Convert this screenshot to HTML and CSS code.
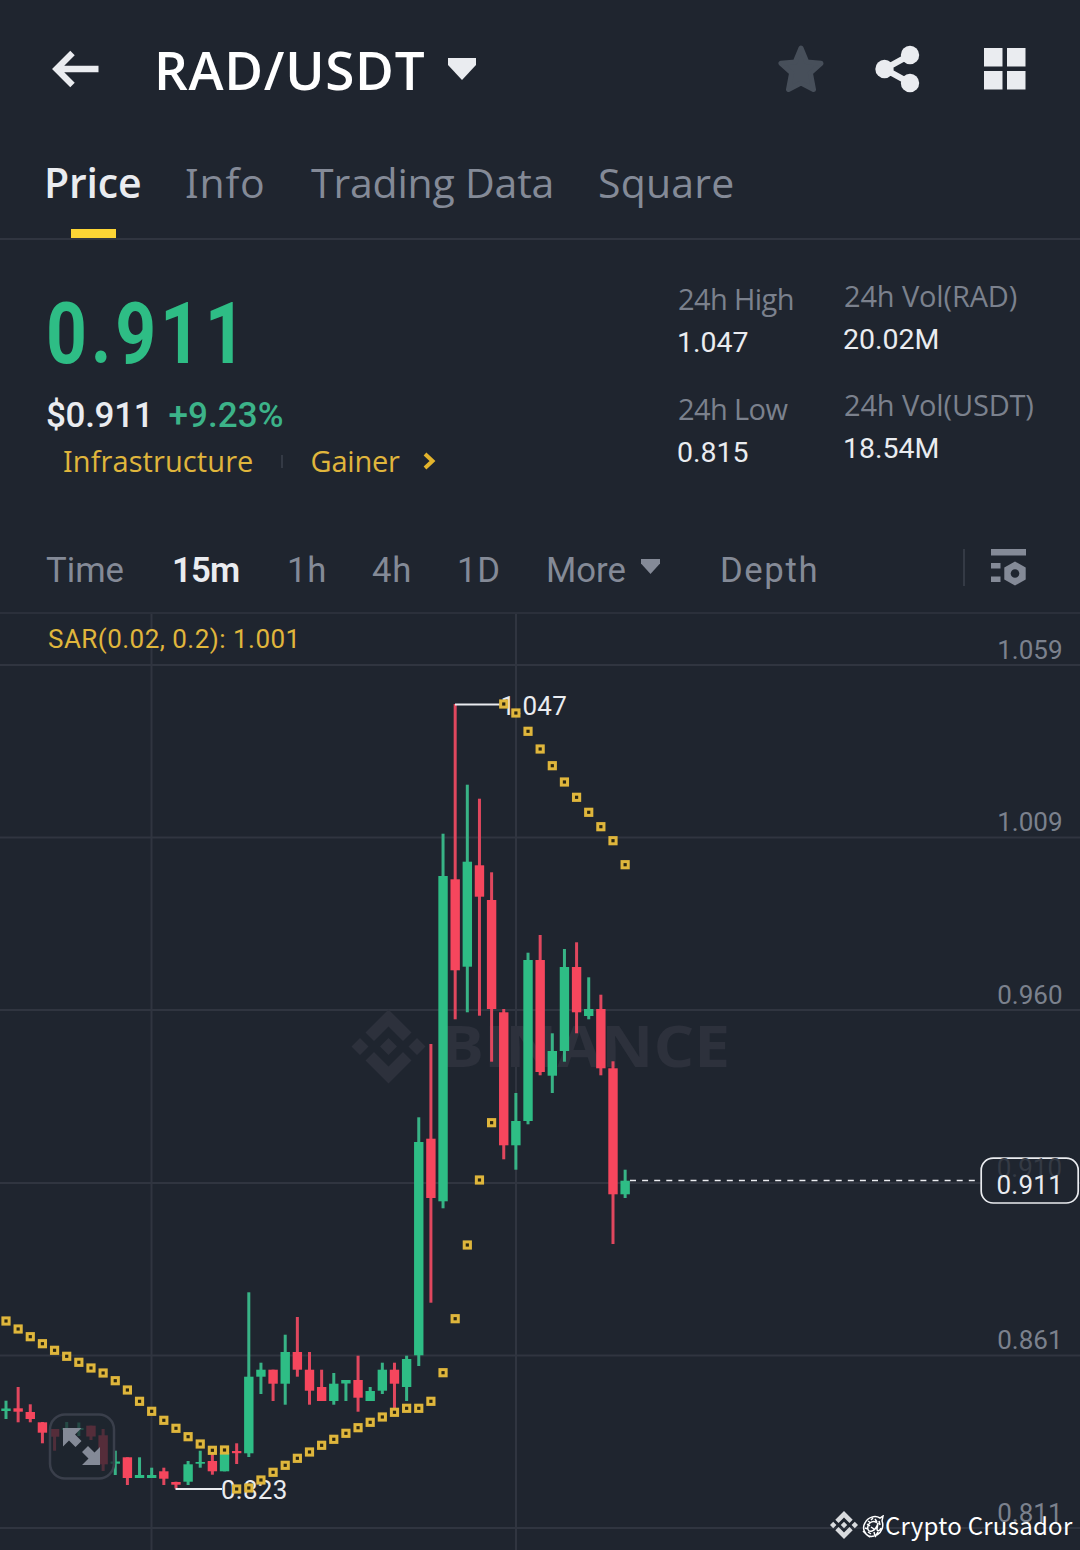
FILE: index.html
```
<!DOCTYPE html>
<html lang="en">
<head>
<meta charset="utf-8">
<title>RAD/USDT</title>
<link rel="stylesheet" href="styles.css">
</head>
<body>
<header class="topbar">
  <svg class="back" width="47" height="38" viewBox="0 0 47 38"><path d="M46.5 19H6M20.500 3 4.500 19l16 16" fill="none" stroke="#eaecf0" stroke-width="6.300"/></svg>
  <h1 class="pair">RAD/USDT</h1>
  <svg class="pair-caret" width="28" height="22" viewBox="0 0 28 22"><path d="M0 0h28v7L14 22 0 7z" fill="#eaecf0"/></svg>
  <div class="actions">
    <svg width="46" height="48" viewBox="0 0 46 48"><path d="M23 3l5.800 14L43 18.300 32.400 28 35.500 44.500 23 38l-12.500 6.500L13.600 28 3 18.300 17.200 17z" fill="#474f5a" stroke="#474f5a" stroke-width="5" stroke-linejoin="round"/></svg>
    <svg width="45" height="48" viewBox="0 0 45 48"><path d="M35 10 9.500 24 35 38" fill="none" stroke="#eaecf0" stroke-width="6"/><g fill="#eaecf0"><circle cx="9.500" cy="24" r="9.200"/><circle cx="35" cy="10" r="9.200"/><circle cx="35" cy="38" r="9.200"/></g></svg>
    <svg width="42" height="42" viewBox="0 0 42 42"><path d="M0 0h18.500v18.500H0zM23 0h18.500v18.500H23zM0 23h18.500v18.500H0zM23 23h18.500v18.500H23z" fill="#eaecf0"/></svg>
  </div>
</header>

<nav class="tabs">
  <span class="tab tab-active">Price</span>
  <span class="tab tab-info">Info</span>
  <span class="tab tab-data">Trading Data</span>
  <span class="tab tab-square">Square</span>
</nav>

<section class="summary">
  <div class="quote">
    <div class="last-price">0.911</div>
    <div class="sub-price"><span>$0.911</span><span class="change">+9.23%</span></div>
    <div class="tags">
      <span class="tag-infra">Infrastructure</span>
      <i class="tag-divider"></i>
      <span class="tag-gainer">Gainer</span>
      <svg class="chevron" width="14" height="18" viewBox="0 0 14 18"><path d="M2 2l7.500 7L2 16" fill="none" stroke="#e3b42c" stroke-width="4"/></svg>
    </div>
  </div>
  <dl class="stats stats-range">
    <div><dt class="tight">24h High</dt><dd>1.047</dd></div>
    <div><dt class="tight">24h Low</dt><dd>0.815</dd></div>
  </dl>
  <dl class="stats stats-volume">
    <div><dt>24h Vol(RAD)</dt><dd>20.02M</dd></div>
    <div><dt>24h Vol(USDT)</dt><dd>18.54M</dd></div>
  </dl>
</section>

<nav class="intervals">
  <span>Time</span>
  <span class="interval-active">15m</span>
  <span class="wide">1h</span>
  <span class="wide">4h</span>
  <span class="wide">1D</span>
  <span class="more">More<svg width="19" height="15" viewBox="0 0 19 15"><path d="M0 0h19v4.500L9.500 15 0 4.500z" fill="#848a97"/></svg></span>
  <span class="wider">Depth</span>
  <span class="settings">
    <svg width="35" height="37" viewBox="0 0 35 37"><path d="M0 0h35v6.500H0zM0 14h9.500v5.500H0zM0 27.500h9.500V33H0zM24 12.500l10.700 6v12L24 36.500l-10.700-6v-12z" fill="#848a97"/><circle cx="24" cy="24.500" r="4.300" fill="#1f252f"/></svg>
  </span>
</nav>

<main class="chart">
  <svg id="plot" width="1080" height="936" viewBox="0 614 1080 936">
    <g stroke="#303540" stroke-width="2">
      <path d="M0 665H1080M0 837.500H1080M0 1010H1080M0 1183H1080M0 1355.500H1080M0 1528H1080M151.500 614V1550M516 614V1550"/>
    </g>
    <g fill="#2d313c">
      <g transform="translate(388.500 1046.500)">
        <path d="M0-37 23-14 14.500-5.500 0-20-14.500-5.500-23-14zM0 37 23 14 14.500 5.500 0 20-14.500 5.500-23 14zM0-8.500 8.500 0 0 8.500-8.500 0zM-28.500-8.500-20 0l-8.500 8.500L-37 0zM28.500-8.500 37 0l-8.500 8.500L20 0z"/>
      </g>
      <text class="brand" x="441" y="1067" textLength="289" lengthAdjust="spacingAndGlyphs">BINANCE</text>
    </g>
    <g class="axis" text-anchor="end">
      <text x="1062.500" y="659">1.059</text>
      <text x="1062.500" y="831">1.009</text>
      <text x="1062.500" y="1004">0.960</text>
      <text x="1062.500" y="1349">0.861</text>
      <text x="1062.500" y="1522">0.811</text>
    </g>
    <text class="sar-label" x="48" y="648">SAR(0.02, 0.2): 1.001</text>
    <g id="candles"></g>
    <path d="M455 704.500H503M175.500 1489H222" stroke="#eaecf0" stroke-width="2"/>
    <text class="mark" x="500.500" y="715">1.047</text>
    <text class="mark" x="221" y="1499">0.823</text>
    <g id="sar" fill="#2b2611" stroke="#dfb63c" stroke-width="3"></g>
    <path d="M630 1180.500H978" stroke="#eaecf0" stroke-width="1.700" stroke-dasharray="6 6.100"/>
    <rect x="981.200" y="1158.200" width="97" height="44.800" rx="12" fill="#1f252f" stroke="#eaecf0" stroke-width="1.700"/>
    <text class="ghost" x="1062" y="1177" text-anchor="end">0.910</text>
    <text class="mark" x="996.500" y="1194">0.911</text>
    <g>
      <rect x="50" y="1414.500" width="64" height="64" rx="15" fill="#1f252f" fill-opacity=".75" stroke="#3a3f4b" stroke-width="2.500"/>
      <path d="M63 1428h18.500l-6.500 6.500 6.500 6.500-6 6-6.500-6.500-6 6zM100 1465H82l6.500-6.500-6.500-6.500 6-6 6.500 6.500 5.500-5.500z" fill="#848a97"/>
    </g>
  </svg>
  <div class="credit">
    <svg width="28" height="30" viewBox="-37 -39 74 78"><path d="M0-37 23-14 14.500-5.500 0-20-14.500-5.500-23-14zM0 37 23 14 14.500 5.500 0 20-14.500 5.500-23 14zM0-8.500 8.500 0 0 8.500-8.500 0zM-28.500-8.500-20 0l-8.500 8.500L-37 0zM28.500-8.500 37 0l-8.500 8.500L20 0z" fill="#d9dbde"/></svg>
    <svg class="emblem" width="22" height="24" viewBox="0 0 22 24" fill="none" stroke="#fff" stroke-width="1.500"><path d="M8 22C2 19 0 13 3 8 6 2 13 0 18 3l3-2-1 5c2 5 0 11-5 14M4 19c2 2 5 3 8 2M15 8c-3-3-8-1-9 3s1 6 4 5 5-4 6-8l-1 6c0 3 3 2 4-1M9 5l2-2M3 13l3 1M12 17l1 4M6 17l3 2M5 9l3 2M13 4l2 3M9 12l3 2M1 16l4 4M16 17l-3 5M6 6l3 2M17 6l1 4"/></svg>
    <span>Crypto Crusador</span>
  </div>
</main>
<script src="chart.js"></script>
</body>
</html>
```
FILE: chart.js
```
// Each candle: direction (1 up, 0 down), high, body top, body bottom, low.
const candles = [
  [1,1400.7,1408.5,1411,1419],[0,1387,1408.3,1411.7,1422.3],[0,1404.3,1412,1419,1422.3],[0,1422,1422.3,1432.7,1443.3],
  [0,1429,1429,1436.7,1450.7],[1,1422,1428,1430,1436],[1,1422.5,1428,1430,1436],[0,1425.7,1425.7,1436.5,1440],
  [0,1429,1435.3,1464.3,1471],[1,1450.7,1461.5,1463.7,1475],[0,1457.3,1457.3,1478,1485],[1,1457.3,1475,1478,1478],
  [1,1467.7,1475,1478,1478],[0,1467.7,1471.3,1478.7,1485],[0,1481.7,1482,1484.7,1488.5],[1,1461,1464.3,1481.7,1485],
  [1,1450.7,1462,1463.7,1467.7],[0,1453.5,1461,1471.3,1474.7],[1,1450,1453,1471.3,1471.3],[0,1443.3,1451,1453.2,1464],
  [1,1292.3,1376.7,1453.3,1457],[1,1362.7,1369.7,1376.7,1394],[0,1369.7,1369.7,1383.7,1401],[1,1334.7,1352,1383.7,1404.7],
  [0,1317,1352,1369.7,1376.7],[0,1352,1369.7,1390.7,1404.7],[0,1369.7,1387,1401,1401],[1,1373,1383.7,1401,1404.7],
  [1,1380,1380,1383.5,1401],[0,1355.7,1380,1397.7,1411.7],[1,1387,1391,1401,1401],[1,1362.7,1369.7,1390.7,1394],
  [0,1362.7,1369.7,1383.7,1408],[1,1355.7,1359,1387,1401],[1,1117.3,1142,1355.3,1366],[0,1044,1138.7,1198,1302.7],
  [1,833.7,876,1201.3,1208.3],[0,704,879.3,970.3,1019.3],[1,784.7,861.7,966.7,1012.3],[0,798.7,865.3,896.7,1015.7],
  [0,872.3,900,1009,1061.7],[0,1009,1012.3,1145.3,1159.3],[1,1093,1121,1145.3,1169.7],[1,952.7,960,1121,1124.3],
  [0,935,960,1072,1075.3],[1,1033.3,1051,1075.7,1093],[1,949,967,1051,1061.7],[0,942.3,967,1012.3,1033.3],
  [1,977.3,1009,1016,1019.3],[0,994.7,1009,1068.3,1075.3],[0,1061.3,1068.3,1194.3,1244],[1,1169.7,1180.7,1194.3,1198]
];

const sar = [
  1321,1329,1336.7,1343.7,1350.3,1356.3,1362.3,1368,1373,1380.7,1390,1401.3,1411.3,
  1420.3,1428.3,1436.7,1444,1450.3,1450,1489,1488,1480,1472.3,1465.3,1458.3,1452,
  1445.3,1439.3,1433.3,1427.7,1422.3,1417,1412.3,1408.3,1408.3,1401.3,1372.7,1318.7,1245,
  1180,1122.7,704,713,731.3,749,765.7,782,797.3,812.3,826.7,840.7,864.7
];

const STEP = 12.14;
const xAt = i => 6 + i * STEP;

const rect = (x, y, w, h, fill) =>
  `<rect x="${x.toFixed(2)}" y="${y}" width="${w}" height="${h.toFixed(1)}"${fill ? ` fill="${fill}"` : ''}/>`;

document.getElementById('candles').innerHTML = candles.map(([up, high, top, bottom, low], i) => {
  const x = xAt(i);
  return rect(x - 1.5, high, 3, low - high, up ? '#38b386' : '#e0475e') +
         rect(x - 4.7, top, 9.4, bottom - top, up ? '#2ebd85' : '#f6465d');
}).join('');

document.getElementById('sar').innerHTML = sar.map((y, i) => rect(xAt(i) - 3.1, y - 3.1, 6.2, 6.2)).join('');
```
FILE: styles.css
```
* { box-sizing: border-box; margin: 0; padding: 0; }

body {
  width: 1080px;
  height: 1550px;
  overflow: hidden;
  background: #1f252f;
  color: #eaecf0;
  font-family: "Open Sans", sans-serif;
}

svg { display: block; flex: none; }
span { white-space: nowrap; }

.topbar {
  display: flex;
  align-items: center;
  height: 137px;
  padding: 0 54px 0 52px;
}
.pair {
  width: 272px;
  margin-left: 55px;
  padding-top: 2px;
  color: #fff;
  font-size: 53px;
  font-weight: 650;
  line-height: 72px;
  letter-spacing: .7px;
}
.pair-caret { margin-left: 22px; }
.actions { display: flex; align-items: center; margin-left: auto; }
.actions svg + svg { margin-left: 51px; }
.actions svg:last-child { margin-left: 64px; }

.tabs {
  display: grid;
  grid-template-columns: 141px 126px 287px auto;
  height: 103px;
  padding-left: 44px;
  border-bottom: 2px solid #303540;
  color: #848a97;
  font-size: 41px;
  font-weight: 500;
  line-height: 91px;
}
.tab-active { position: relative; color: #eaecf0; font-weight: 600; letter-spacing: -.2px; }
.tab-active::after {
  content: "";
  position: absolute;
  left: 27px;
  bottom: 0;
  width: 45px;
  height: 9px;
  background: #fcd535;
}
.tab-info { letter-spacing: .8px; }
.tab-data { letter-spacing: -.2px; }
.tab-square { letter-spacing: .2px; }
.tab-info, .tag-infra { font-feature-settings: "ss01", "ss02", "ss03", "salt", "cv01"; }

.summary {
  display: grid;
  grid-template-columns: 677px 166px auto;
  height: 287px;
}
.quote { padding: 50px 0 0 46px; }
.last-price {
  width: 250px;
  height: 101px;
  color: #2ebd85;
  font: 700 85px/88px Roboto, sans-serif;
  letter-spacing: 4.500px;
  transform: scaleX(.84);
  transform-origin: left;
}
.sub-price {
  display: flex;
  gap: 15px;
  font: 500 35px/50px Roboto, sans-serif;
  letter-spacing: -.3px;
}
.change { color: #3cb389; letter-spacing: .1px; }
.tags {
  display: flex;
  align-items: center;
  padding-left: 17px;
  color: #e0b63c;
  font-size: 29px;
  line-height: 40px;
}
.tag-infra { letter-spacing: .1px; }
.tag-gainer { letter-spacing: -.2px; }
.tag-divider { width: 2px; height: 13px; margin: 0 28px 0 27px; background: #343a45; }
.chevron { margin-left: 23px; }

.stats { display: flex; flex-direction: column; gap: 22px; padding-top: 37px; }
.stats-volume { gap: 21.500px; padding-top: 33.500px; }
.stats dt { padding-left: 1px; color: #7b818d; font-size: 29px; line-height: 44px; letter-spacing: -.15px; white-space: nowrap; }
.stats .tight { letter-spacing: -.6px; }
.stats dd { font: 28.500px/44px Roboto, sans-serif; }

.intervals {
  display: grid;
  grid-template-columns: 126px 115px 85px 85px 89px 174px 243px auto;
  height: 87px;
  padding-left: 46px;
  border-bottom: 2px solid #2b303b;
  color: #848a97;
  font: 34.700px/86px Roboto, sans-serif;
}
.interval-active { color: #eaecf0; font-weight: 600; letter-spacing: -.8px; }
.wide { letter-spacing: .8px; }
.wider { letter-spacing: 1.600px; }
.more { display: flex; align-items: center; }
.more svg { margin: -8px 0 0 15px; }
.settings {
  align-self: center;
  display: flex;
  height: 37px;
  margin-bottom: 6px;
  padding-left: 26px;
  border-left: 2px solid #343a45;
}

.chart { position: relative; height: 936px; }
.chart text { font-family: Roboto, sans-serif; font-size: 26px; }
.axis text { fill: #7b818d; }
.chart .sar-label { fill: #e0b63c; letter-spacing: .47px; }
.chart .mark { fill: #eaecf0; letter-spacing: .25px; }
.chart .ghost { fill: #343a44; }
.chart .brand { font-family: "Open Sans", sans-serif; font-size: 57px; font-weight: 700; }

.credit {
  position: absolute;
  right: 7.500px;
  bottom: 7px;
  display: flex;
  align-items: center;
  height: 36px;
  color: #fff;
  font: 24px/36px "Noto Sans CJK SC", sans-serif;
  letter-spacing: .27px;
}
.emblem { margin: 4px 1px 0 4px; }
```
